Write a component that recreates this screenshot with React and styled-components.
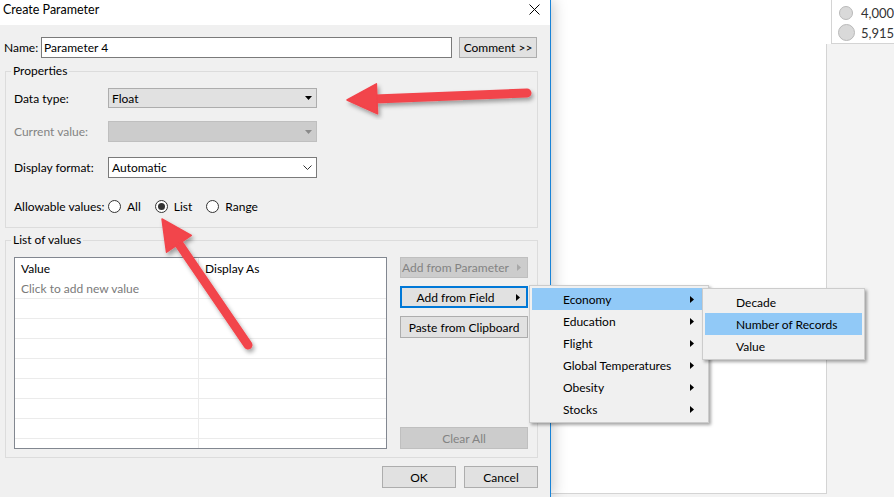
import React from 'react';
import styled, { createGlobalStyle } from 'styled-components';

const Global = createGlobalStyle`
  html, body { margin: 0; padding: 0; }
  body { font-family: "Lato", "Noto Sans", sans-serif; font-size: 12px; color: #000; }
  * { box-sizing: border-box; }
`;

const Page = styled.div`
  position: relative;
  display: flex;
  width: 894px;
  height: 497px;
  overflow: hidden;
  background: #f3f3f3;
  white-space: nowrap;
`;

const Dialog = styled.div`
  position: relative;
  z-index: 1;
  width: 551px;
  flex: none;
  display: flex;
  flex-direction: column;
  background: #f0f0f0;
  border-right: 1px solid #1883d7;
  box-shadow: 2px 0 14px rgba(0, 0, 0, 0.22);
`;

const TitleBar = styled.div`
  height: 25px;
  flex: none;
  display: flex;
  align-items: flex-start;
  justify-content: space-between;
  background: #fff;
  padding: 0 10px 0 3px;
`;

const Title = styled.span`
  line-height: 20px;
  font-size: 12.5px;
`;

const CloseIcon = styled.svg`
  margin-top: 4px;
`;

const Body = styled.div`
  flex: 1;
  display: flex;
  flex-direction: column;
  padding: 12px 12px 0 5px;
`;

const NameRow = styled.div`
  display: flex;
  align-items: center;
  height: 21px;
`;

const NameLabel = styled.span`
  width: 37px;
  margin-left: -1px;
  flex: none;
`;

const TextInput = styled.div`
  width: 411px;
  height: 21px;
  background: #fff;
  border: 1px solid #7a7a7a;
  padding: 0 2px;
  line-height: 19px;
  margin-right: 7px;
`;

const Button = styled.div`
  display: flex;
  align-items: center;
  justify-content: center;
  width: ${p => p.$w || 73}px;
  height: ${p => p.$h || 21}px;
  background: ${p => (p.$disabled ? '#cccccc' : '#e1e1e1')};
  border: ${p => (p.$focus ? '2px solid #0078d7' : p.$disabled ? '1px solid #bfbfbf' : '1px solid #adadad')};
  color: ${p => (p.$disabled ? '#838383' : '#000')};
`;

const ButtonText = styled.span`
  flex: 1;
  text-align: center;
`;

const ButtonArrow = styled.span`
  width: 17px;
  flex: none;
  display: flex;
  justify-content: center;
`;

const Group = styled.fieldset`
  margin: ${p => p.$mt || 0}px 0 0 0;
  padding: ${p => p.$pt || 0}px 8px ${p => p.$pb || 0}px 8px;
  border: 1px solid #dcdcdc;
  min-width: 0;
`;

const Legend = styled.legend`
  padding: 0 2px;
  margin-left: -3px;
  line-height: 14px;
`;

const FieldRow = styled.div`
  display: flex;
  align-items: center;
  height: ${p => p.$h || 21}px;
  margin-top: ${p => p.$mt || 0}px;
`;

const FieldLabel = styled.span`
  width: 94px;
  flex: none;
  color: ${p => (p.$disabled ? '#838383' : '#000')};
`;

const Select = styled.div`
  width: 209px;
  height: 100%;
  display: flex;
  align-items: center;
  justify-content: space-between;
  padding: 0 4px 0 3px;
  background: ${p => (p.$variant === 'disabled' ? '#cccccc' : p.$variant === 'white' ? '#fff' : '#e1e1e1')};
  border: 1px solid ${p => (p.$variant === 'disabled' ? '#bfbfbf' : p.$variant === 'white' ? '#7a7a7a' : '#adadad')};
`;

const RadioGroup = styled.div`
  display: flex;
  align-items: center;
  gap: 14px;
`;

const RadioItem = styled.label`
  display: flex;
  align-items: center;
  gap: 6px;
`;

const RadioCircle = styled.span`
  width: 13px;
  height: 13px;
  border-radius: 50%;
  border: 1px solid #333;
  background: #fff;
  display: flex;
  align-items: center;
  justify-content: center;
  &::after {
    content: '';
    display: ${p => (p.$checked ? 'block' : 'none')};
    width: 7px;
    height: 7px;
    border-radius: 50%;
    background: #333;
  }
`;

const ListArea = styled.div`
  display: flex;
  gap: 13px;
`;

const ValueTable = styled.div`
  width: 373px;
  height: 192px;
  flex: none;
  background: #fff;
  border: 1px solid #828790;
  display: flex;
  flex-direction: column;
  overflow: hidden;
`;

const TableRow = styled.div`
  display: grid;
  grid-template-columns: 184px 1fr;
  height: ${p => p.$h || 20}px;
  flex: none;
  border-bottom: ${p => (p.$line ? '1px solid #ebebeb' : 'none')};
  color: ${p => (p.$muted ? '#7a7a7a' : '#000')};
`;

const Cell = styled.div`
  padding-left: 6px;
  display: flex;
  align-items: center;
  border-right: ${p => (p.$divider ? '1px solid #ebebeb' : 'none')};
`;

const SideButtons = styled.div`
  display: flex;
  flex-direction: column;
  gap: 8px;
`;

const Spacer = styled.div`
  flex: 1;
`;

const Footer = styled.div`
  display: flex;
  justify-content: flex-end;
  gap: 8px;
  margin-top: 8px;
`;

const Workspace = styled.div`
  flex: 1;
  display: flex;
`;

const Canvas = styled.div`
  width: 276px;
  height: 494px;
  flex: none;
  background: #fff;
  border-right: 1px solid #d4d4d4;
  border-bottom: 1px solid #d4d4d4;
`;

const SidePanel = styled.div`
  flex: 1;
  display: flex;
  flex-direction: column;
`;

const LegendStrip = styled.div`
  height: 44px;
  background: #fff;
  padding-left: 5px;
  margin-left: -1px;
`;

const LegendBox = styled.div`
  height: 100%;
  background: #fff;
  border-left: 1px solid #d4d4d4;
  border-bottom: 1px solid #d4d4d4;
  display: flex;
  flex-direction: column;
  padding: 5px 0 0 5px;
  gap: 2px;
  overflow: hidden;
`;

const LegendItem = styled.div`
  display: flex;
  align-items: center;
  gap: 6px;
  font-size: 13px;
  color: #333;
  height: ${p => p.$size + 2}px;
`;

const Bubble = styled.span`
  width: ${p => p.$size}px;
  height: ${p => p.$size}px;
  margin-left: ${p => (18 - p.$size) / 2}px;
  margin-right: ${p => (18 - p.$size) / 2}px;
  border-radius: 50%;
  background: #d9d9d9;
  border: 1px solid #b9b9b9;
  flex: none;
`;

const Menu = styled.div`
  position: absolute;
  z-index: 3;
  left: ${p => p.$x}px;
  top: ${p => p.$y}px;
  width: ${p => p.$w}px;
  background: #f0f0f0;
  border: 1px solid #cccccc;
  padding: 2px;
  box-shadow: 2px 2px 3px rgba(0, 0, 0, 0.35);
`;

const MenuItem = styled.div`
  height: 22px;
  display: flex;
  align-items: center;
  padding-left: 31px;
  background: ${p => (p.$active ? '#91c9f7' : 'transparent')};
`;

const MenuText = styled.span`
  flex: 1;
`;

const MenuArrow = styled.span`
  width: 16px;
  display: flex;
`;

const Overlay = styled.svg`
  position: absolute;
  z-index: 4;
  left: 0;
  top: 0;
  pointer-events: none;
`;

const Triangle = ({ dir = 'down', color = '#000' }) =>
  dir === 'down' ? (
    <svg width="7" height="4" viewBox="0 0 7 4"><path d="M0 0H7L3.5 4Z" fill={color} /></svg>
  ) : (
    <svg width="4" height="7" viewBox="0 0 4 7"><path d="M0 0L4 3.5L0 7Z" fill={color} /></svg>
  );

const Chevron = () => (
  <svg width="9" height="5" viewBox="0 0 9 5">
    <path d="M0.5 0.5L4.5 4.5L8.5 0.5" fill="none" stroke="#333" strokeWidth="1" />
  </svg>
);

const Radio = ({ label, checked }) => (
  <RadioItem>
    <RadioCircle $checked={checked} />
    <span>{label}</span>
  </RadioItem>
);

const fieldMenu = ['Economy', 'Education', 'Flight', 'Global Temperatures', 'Obesity', 'Stocks'];
const economyMenu = ['Decade', 'Number of Records', 'Value'];

const arrowHead = (tip, tail, len, half) => {
  const dx = tail[0] - tip[0];
  const dy = tail[1] - tip[1];
  const d = Math.hypot(dx, dy);
  const ux = dx / d;
  const uy = dy / d;
  const bx = tip[0] + ux * len;
  const by = tip[1] + uy * len;
  const a = [bx - uy * half, by + ux * half];
  const b = [bx + uy * half, by - ux * half];
  return { points: `${tip.join(',')} ${a.join(',')} ${b.join(',')}`, base: [bx - ux * 2, by - uy * 2] };
};

const RedArrow = ({ tip, tail }) => {
  const h = arrowHead(tip, tail, 30, 15);
  return (
    <g filter="url(#shadow)">
      <line x1={tail[0]} y1={tail[1]} x2={h.base[0]} y2={h.base[1]} stroke="#f2444b" strokeWidth="9" strokeLinecap="round" />
      <polygon points={h.points} fill="#f2444b" stroke="#f2444b" strokeWidth="1.5" strokeLinejoin="round" />
    </g>
  );
};

export default function App() {
  const rows = Array.from({ length: 8 });
  return (
    <Page>
      <Global />
      <Dialog>
        <TitleBar>
          <Title>Create Parameter</Title>
          <CloseIcon width="11" height="11" viewBox="0 0 11 11">
            <path d="M0.5 0.5L10.5 10.5M10.5 0.5L0.5 10.5" stroke="#000" strokeWidth="1" />
          </CloseIcon>
        </TitleBar>
        <Body>
          <NameRow>
            <NameLabel>Name:</NameLabel>
            <TextInput>Parameter 4</TextInput>
            <Button $w={78}>Comment &gt;&gt;</Button>
          </NameRow>

          <Group $mt={6} $pt={10} $pb={13}>
            <Legend>Properties</Legend>
            <FieldRow $h={20}>
              <FieldLabel>Data type:</FieldLabel>
              <Select>
                <span>Float</span>
                <Triangle />
              </Select>
            </FieldRow>
            <FieldRow $mt={13} $h={21}>
              <FieldLabel $disabled>Current value:</FieldLabel>
              <Select $variant="disabled">
                <span />
                <Triangle color="#8a8a8a" />
              </Select>
            </FieldRow>
            <FieldRow $mt={15} $h={21}>
              <FieldLabel>Display format:</FieldLabel>
              <Select $variant="white">
                <span>Automatic</span>
                <Chevron />
              </Select>
            </FieldRow>
            <FieldRow $mt={20} $h={16}>
              <FieldLabel>Allowable values:</FieldLabel>
              <RadioGroup>
                <Radio label="All" />
                <Radio label="List" checked />
                <Radio label="Range" />
              </RadioGroup>
            </FieldRow>
          </Group>

          <Group $mt={5} $pt={10} $pb={8}>
            <Legend>List of values</Legend>
            <ListArea>
              <ValueTable>
                <TableRow $h={21}>
                  <Cell $divider>Value</Cell>
                  <Cell>Display As</Cell>
                </TableRow>
                <TableRow $line $muted>
                  <Cell $divider>Click to add new value</Cell>
                  <Cell />
                </TableRow>
                {rows.map((_, i) => (
                  <TableRow key={i} $line>
                    <Cell $divider />
                    <Cell />
                  </TableRow>
                ))}
              </ValueTable>
              <SideButtons>
                <Button $w={128} $disabled>
                  <ButtonText>Add from Parameter</ButtonText>
                  <ButtonArrow><Triangle dir="right" color="#a8a8a8" /></ButtonArrow>
                </Button>
                <Button $w={128} $h={22} $focus>
                  <ButtonText>Add from Field</ButtonText>
                  <ButtonArrow><Triangle dir="right" /></ButtonArrow>
                </Button>
                <Button $w={128} $h={22}>Paste from Clipboard</Button>
                <Spacer />
                <Button $w={128} $h={22} $disabled>Clear All</Button>
              </SideButtons>
            </ListArea>
          </Group>

          <Footer>
            <Button $w={74} $h={22}>OK</Button>
            <Button $w={74} $h={22}>Cancel</Button>
          </Footer>
        </Body>
      </Dialog>

      <Workspace>
        <Canvas />
        <SidePanel>
          <LegendStrip>
            <LegendBox>
              <LegendItem $size={14}>
                <Bubble $size={14} />
                4,000
              </LegendItem>
              <LegendItem $size={17}>
                <Bubble $size={17} />
                5,915
              </LegendItem>
            </LegendBox>
          </LegendStrip>
        </SidePanel>
      </Workspace>

      <Menu $x={529} $y={285} $w={180}>
        {fieldMenu.map((m, i) => (
          <MenuItem key={m} $active={i === 0}>
            <MenuText>{m}</MenuText>
            <MenuArrow><Triangle dir="right" /></MenuArrow>
          </MenuItem>
        ))}
      </Menu>
      <Menu $x={702} $y={288} $w={163}>
        {economyMenu.map((m, i) => (
          <MenuItem key={m} $active={i === 1}>
            <MenuText>{m}</MenuText>
          </MenuItem>
        ))}
      </Menu>

      <Overlay width="894" height="497" viewBox="0 0 894 497">
        <defs>
          <filter id="shadow" x="-20%" y="-20%" width="140%" height="140%">
            <feDropShadow dx="2" dy="3" stdDeviation="2" floodColor="#000" floodOpacity="0.35" />
          </filter>
        </defs>
        <RedArrow tip={[347, 100]} tail={[527, 93]} />
        <RedArrow tip={[162, 219]} tail={[248, 345]} />
      </Overlay>
    </Page>
  );
}
